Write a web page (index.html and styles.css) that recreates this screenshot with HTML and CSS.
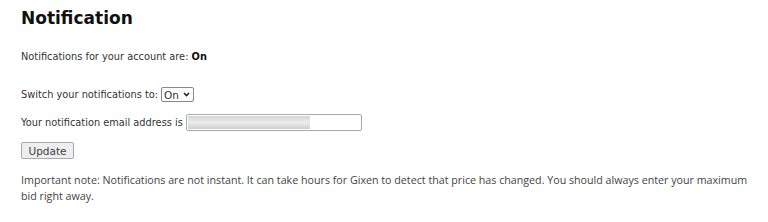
FILE: index.html
```html
<!DOCTYPE html>
<html lang="en">
<head>
    <meta charset="UTF-8">
    <title>Notification</title>
    <link rel="stylesheet" href="styles.css">
</head>
<body>
    <div class="page">
        <h1>Notification</h1>
        <p class="status">Notifications for your account are: <b>On</b></p>
        <form class="settings">
            <div class="row">
                Switch your notifications to:
                <span class="select-wrap">
                    <select class="switch">
                        <option>On</option>
                        <option>Off</option>
                    </select>
                    <svg class="chevron" width="7" height="5" viewBox="0 0 7 5"><path d="M1 1 L3.5 3.5 L6 1" fill="none" stroke="#222" stroke-width="1.6"/></svg>
                </span>
            </div>
            <div class="row">
                Your notification email address is
                <span class="email"><span class="redacted"></span></span>
            </div>
            <div class="row">
                <button type="button" class="update">Update</button>
            </div>
        </form>
        <p class="note">Important note: Notifications are not instant. It can take hours for Gixen to detect that price has changed. You should always enter your maximum bid right away.</p>
    </div>
</body>
</html>
```

FILE: styles.css
```css
body {
    margin: 0;
    background: #ffffff;
    font-family: "DejaVu Sans", sans-serif;
    color: #333;
}
.page {
    padding: 8px 12px 0 21px;
}
h1 {
    font-size: 17px;
    font-weight: bold;
    color: #111;
    margin: 0 0 23px 0;
}
.status {
    font-size: 9.8px;
    margin: 0 0 24px 0;
}
.status b {
    color: #111;
}
.settings {
    font-size: 9.8px;
}
.row {
    display: flex;
    align-items: center;
    gap: 3px;
    height: 17px;
    margin-bottom: 11px;
}
.select-wrap {
    position: relative;
    display: block;
}
.switch {
    display: block;
    appearance: none;
    -webkit-appearance: none;
    font-family: inherit;
    font-size: 10.5px;
    width: 33px;
    height: 15px;
    padding: 0 0 0 2px;
    border: 1px solid #888;
    border-radius: 2px;
    background: #fff;
    color: #333;
}
.chevron {
    position: absolute;
    right: 4px;
    top: 5px;
    pointer-events: none;
}
.email {
    display: block;
    width: 172px;
    height: 13px;
    border: 1px solid #aaa;
    border-radius: 2px;
    padding: 1px;
}
.redacted {
    display: block;
    width: 122px;
    height: 100%;
    background: linear-gradient(to bottom, #d5d5d5, #ececec 50%, #cfcfcf);
}
.update {
    font-family: inherit;
    font-size: 10.5px;
    color: #444;
    padding: 0 6px;
    width: 53px;
    height: 17px;
    background: #eeeeee;
    border: 1px solid #aaa;
    border-radius: 2px;
}
.note {
    font-family: "Open Sans", sans-serif;
    font-size: 10.7px;
    line-height: 16px;
    margin: 13px 0 0 0;
    color: #444;
}
```
